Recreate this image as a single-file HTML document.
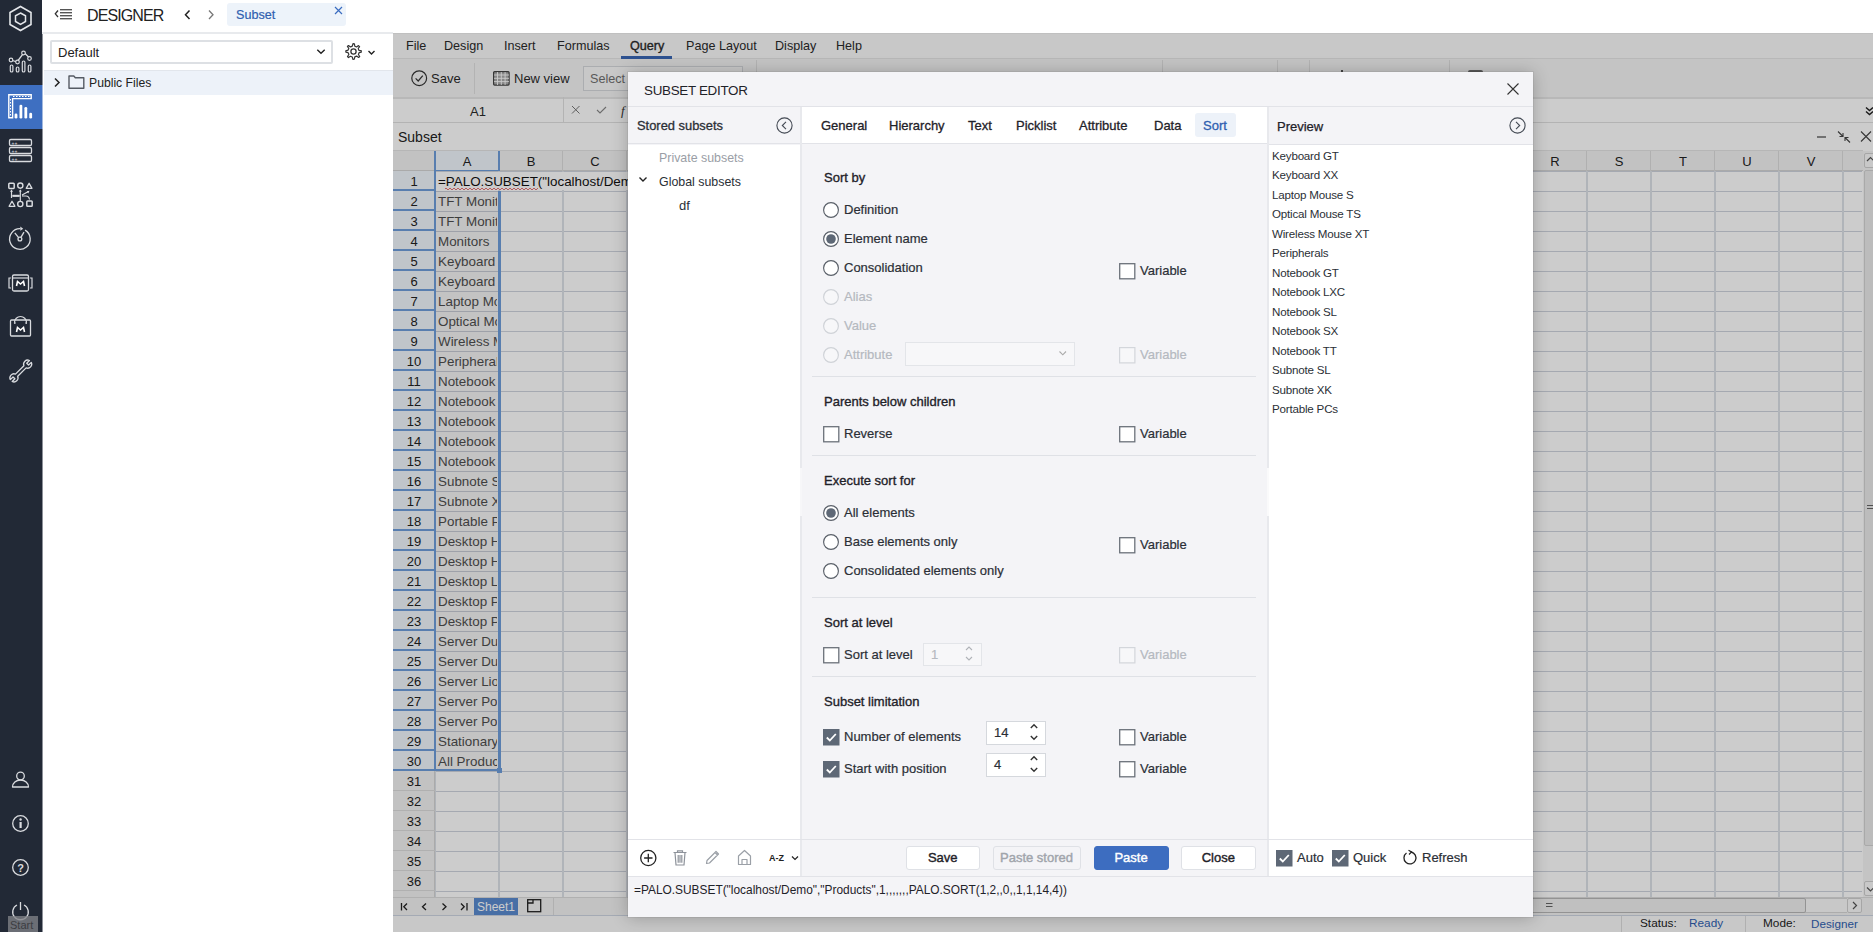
<!DOCTYPE html><html><head><meta charset="utf-8"><style>
*{box-sizing:border-box;margin:0;padding:0}
html,body{width:1873px;height:932px;overflow:hidden}
body{position:relative;font-family:"Liberation Sans",sans-serif;background:#fff;color:#222}
.a{position:absolute}
.t{position:absolute;white-space:nowrap;line-height:1}
svg{position:absolute;overflow:visible}
</style></head><body>
<div class="a" style="left:0;top:0;width:42px;height:932px;background:#222936"></div>
<div class="a" style="left:42px;top:0;width:1px;height:932px;background:#8d9199"></div>
<div class="a" style="left:42px;top:84.5px;width:1px;height:44px;background:#a3b9de"></div>
<div class="a" style="left:0;top:84.5px;width:42px;height:44px;background:#3e6fc1"></div>
<svg style="left:0;top:0" width="42" height="40"><polygon points="20.5,6.5 31,12.5 31,24.5 20.5,30.5 10,24.5 10,12.5" fill="none" stroke="#e4e6ea" stroke-width="1.6"/><polygon points="20.5,13 25.5,15.8 25.5,21.5 20.5,24.3 15.5,21.5 15.5,15.8" fill="none" stroke="#e4e6ea" stroke-width="1.5"/></svg>
<svg style="left:0;top:44px" width="42" height="40"><polyline points="11,16 17,18 24,8.5 30,14.5" fill="none" stroke="#d9dbdf" stroke-width="1.3"/><circle cx="11" cy="16" r="1.8" fill="#222936" stroke="#d9dbdf" stroke-width="1.2"/><circle cx="17.5" cy="18" r="1.8" fill="#222936" stroke="#d9dbdf" stroke-width="1.2"/><circle cx="23.5" cy="9" r="1.8" fill="#222936" stroke="#d9dbdf" stroke-width="1.2"/><circle cx="29.5" cy="14.5" r="1.8" fill="#222936" stroke="#d9dbdf" stroke-width="1.2"/><rect x="10.3" y="21" width="2.6" height="7" rx="1.3" fill="none" stroke="#d9dbdf" stroke-width="1.2"/><rect x="16.3" y="23" width="2.6" height="5" rx="1.3" fill="none" stroke="#d9dbdf" stroke-width="1.2"/><rect x="22.3" y="17" width="2.6" height="11" rx="1.3" fill="none" stroke="#d9dbdf" stroke-width="1.2"/><rect x="28.3" y="21" width="2.6" height="7" rx="1.3" fill="none" stroke="#d9dbdf" stroke-width="1.2"/></svg>
<svg style="left:0;top:84px" width="42" height="44"><path d="M8.8,10.8 H31.2 V14.6 H12.6 V33.8 H8.8 Z" fill="none" stroke="#fff" stroke-width="1.4"/><line x1="13" y1="12.5" x2="30" y2="12.5" stroke="#fff" stroke-width="1" stroke-dasharray="1.5,1.5"/><line x1="10.5" y1="15" x2="10.5" y2="32" stroke="#fff" stroke-width="1" stroke-dasharray="1.5,1.5"/><rect x="14.6" y="29.5" width="2.8" height="5" rx="1.3" fill="#fff"/><rect x="19.5" y="20.8" width="2.8" height="13.7" rx="1.3" fill="#fff"/><rect x="24.4" y="23" width="2.8" height="11.5" rx="1.3" fill="#fff"/><rect x="29.3" y="28.8" width="2.8" height="5.7" rx="1.3" fill="#fff"/></svg>
<svg style="left:0;top:128px" width="42" height="44"><rect x="9.5" y="11.5" width="22" height="6" rx="1.3" fill="none" stroke="#d9dbdf" stroke-width="1.3"/><rect x="9.5" y="19.5" width="22" height="6" rx="1.3" fill="none" stroke="#d9dbdf" stroke-width="1.3"/><rect x="9.5" y="27.5" width="22" height="6" rx="1.3" fill="none" stroke="#d9dbdf" stroke-width="1.3"/><text x="11.5" y="16.5" font-size="5" fill="#d9dbdf" font-family="Liberation Sans">++</text><text x="11.5" y="24.5" font-size="5" fill="#d9dbdf" font-family="Liberation Sans">++</text><text x="11.5" y="32.5" font-size="5" fill="#d9dbdf" font-family="Liberation Sans">++</text></svg>
<svg style="left:0;top:172px" width="42" height="44"><rect x="8.8" y="11.2" width="5.4" height="5.2" rx="0.8" fill="none" stroke="#d9dbdf" stroke-width="1.5"/><circle cx="20.3" cy="13.6" r="2.6" fill="none" stroke="#d9dbdf" stroke-width="1.4"/><polygon points="29.1,11.3 32,16.3 26.2,16.3" fill="none" stroke="#d9dbdf" stroke-width="1.3" stroke-linejoin="round"/><polygon points="12,29.2 14.9,34.3 9.1,34.3" fill="none" stroke="#d9dbdf" stroke-width="1.3" stroke-linejoin="round"/><circle cx="20.3" cy="32" r="2.6" fill="none" stroke="#d9dbdf" stroke-width="1.4"/><rect x="26.8" y="29" width="5.4" height="5.2" rx="0.8" fill="none" stroke="#d9dbdf" stroke-width="1.5"/><path d="M11.5,26 V18.8 M20.3,29 V18.5 M12.5,23.8 H19.5 M22,24 H26 Q29,24 29.5,27.5 M22,23 L28.5,19.5" fill="none" stroke="#d9dbdf" stroke-width="1.2"/><path d="M11.5,17.6 L10,19.8 H13 Z M20.3,17.4 L18.8,19.6 H21.8 Z M29.5,18.8 L26.8,19.3 L28.2,21.5 Z" fill="#d9dbdf"/><rect x="12.5" y="22.8" width="7" height="2" fill="#d9dbdf"/></svg>
<svg style="left:0;top:216px" width="42" height="44"><path d="M25.05,14.08 A10.3,10.3 0 1 1 20.3,12.7" fill="none" stroke="#d9dbdf" stroke-width="1.3"/><path d="M20.3,10.6 L23.2,12.7 L20.3,14.8 Z" fill="#d9dbdf"/><circle cx="19.9" cy="23" r="1.9" fill="none" stroke="#d9dbdf" stroke-width="1.3"/><line x1="20.9" y1="21.3" x2="24" y2="16.2" stroke="#d9dbdf" stroke-width="1.3"/><line x1="18.6" y1="21.6" x2="14.8" y2="16.8" stroke="#d9dbdf" stroke-width="1.3"/></svg>
<svg style="left:0;top:260px" width="42" height="44"><rect x="12.5" y="15" width="16" height="16" rx="1.5" fill="none" stroke="#d9dbdf" stroke-width="1.3"/><line x1="12.5" y1="18" x2="28.5" y2="18" stroke="#d9dbdf" stroke-width="1.2"/><path d="M11,18 H9 V28 H11 M30,18 H32 V28 H30" fill="none" stroke="#d9dbdf" stroke-width="1.2"/><path d="M16.5,26 L17.5,21.5 L20.5,24 L23.5,21.5 L24.5,26" fill="none" stroke="#fff" stroke-width="1.6"/></svg>
<svg style="left:0;top:304px" width="42" height="44"><rect x="10.5" y="16" width="20" height="16" rx="1" fill="none" stroke="#d9dbdf" stroke-width="1.3"/><path d="M14.5,18.5 A6,6 0 0 1 26.5,18.5" fill="none" stroke="#d9dbdf" stroke-width="1.2"/><circle cx="14.8" cy="19" r="0.9" fill="#d9dbdf"/><circle cx="26.2" cy="19" r="0.9" fill="#d9dbdf"/><path d="M16.5,28 L17.5,23.5 L20.5,26 L23.5,23.5 L24.5,28" fill="none" stroke="#fff" stroke-width="1.6"/></svg>
<svg style="left:0;top:348px" width="42" height="44"><g transform="translate(20.8,23) rotate(-45) scale(0.88)"><path d="M-6.77,-1.8 L6.77,-1.8 A4.6,4.6 0 0 1 15.35,-1.5 L11,-1.5 L11,1.5 L15.35,1.5 A4.6,4.6 0 0 1 6.77,1.8 L-6.77,1.8 A4.6,4.6 0 0 1 -15.35,1.5 L-11,1.5 L-11,-1.5 L-15.35,-1.5 A4.6,4.6 0 0 1 -6.77,-1.8 Z" fill="none" stroke="#d9dbdf" stroke-width="1.5" stroke-linejoin="round"/></g></svg>
<svg style="left:0;top:757px" width="42" height="44"><circle cx="20.5" cy="19" r="3.8" fill="none" stroke="#d9dbdf" stroke-width="1.3"/><path d="M12.5,30 A8,7 0 0 1 28.5,30 Z" fill="none" stroke="#d9dbdf" stroke-width="1.3" stroke-linejoin="round"/></svg>
<svg style="left:0;top:801px" width="42" height="44"><circle cx="20.5" cy="22.5" r="7.8" fill="none" stroke="#d9dbdf" stroke-width="1.3"/><rect x="19.5" y="21" width="2.2" height="6" fill="#d9dbdf"/><circle cx="20.6" cy="18.5" r="1.2" fill="#d9dbdf"/></svg>
<svg style="left:0;top:845px" width="42" height="44"><circle cx="20.5" cy="22.5" r="7.8" fill="none" stroke="#d9dbdf" stroke-width="1.3"/><text x="20.6" y="26.5" text-anchor="middle" font-size="11" font-weight="bold" fill="#d9dbdf" font-family="Liberation Sans">?</text></svg>
<svg style="left:0;top:889px" width="42" height="44"><path d="M17,16 A7.8,7.8 0 1 0 24,16" fill="none" stroke="#d9dbdf" stroke-width="1.3"/><line x1="20.5" y1="13" x2="20.5" y2="21" stroke="#d9dbdf" stroke-width="1.3"/></svg>
<div class="a" style="left:8px;top:916px;width:30px;height:16px;background:rgba(128,130,134,0.78)"></div>
<div class="t" style="left:10px;top:920px;font-size:11px;color:#3b3d42">Start</div>
<div class="a" style="left:42px;top:0;width:1831px;height:32px;background:#fff"></div>
<div class="a" style="left:42px;top:32px;width:351px;height:2px;background:#e8eaed"></div>
<svg style="left:54px;top:8px" width="20" height="14"><path d="M4,2.5 L1.3,5.8 L4,9" fill="none" stroke="#333" stroke-width="1.3"/><rect x="6" y="1" width="12" height="1.4" fill="#555"/><rect x="6" y="4" width="12" height="1.4" fill="#555"/><rect x="6" y="7" width="12" height="1.4" fill="#555"/><rect x="6" y="10" width="12" height="1.4" fill="#555"/></svg>
<div class="t" id="designer" style="left:87px;top:8px;font-size:16px;letter-spacing:-0.9px;color:#222">DESIGNER</div>
<svg style="left:183px;top:9px" width="10" height="12"><path d="M6.5,1.5 L2.5,5.8 L6.5,10" fill="none" stroke="#222" stroke-width="1.5"/></svg>
<svg style="left:206px;top:9px" width="10" height="12"><path d="M3,1.5 L7,5.8 L3,10" fill="none" stroke="#777" stroke-width="1.3"/></svg>
<div class="a" style="left:227px;top:3px;width:119px;height:23px;background:#edf3fa;border-radius:3px"></div>
<div class="t" id="subsettab" style="left:236px;top:9px;font-size:12.6px;color:#2f5fb0;-webkit-text-stroke:0.2px #2f5fb0">Subset</div>
<svg style="left:334px;top:6px" width="10" height="10"><path d="M1,1 L8,8 M8,1 L1,8" stroke="#3a6cc0" stroke-width="1.2"/></svg>
<div class="a" style="left:50px;top:39.5px;width:283px;height:24.5px;border:2px solid #dde0e4;border-radius:2px;background:#fff"></div>
<div class="t" id="default" style="left:58px;top:46px;font-size:13px;color:#222">Default</div>
<svg style="left:315px;top:48px" width="12" height="8"><path d="M2.3,1.8 L6,5.3 L9.7,1.8" fill="none" stroke="#222" stroke-width="1.4"/></svg>
<svg style="left:343px;top:42px" width="20" height="20"><path d="M10,1.6 L11.4,1.9 L11.8,4.2 L13.6,5 L15.5,3.6 L16.6,4.6 L15.2,6.5 L15.9,8.3 L18.2,8.7 L18.3,10.1 L16.1,10.7 L15.4,12.5 L16.7,14.5 L15.6,15.5 L13.6,14.1 L11.8,14.9 L11.3,17.2 L9.9,17.3 L9.3,15 L7.5,14.3 L5.5,15.6 L4.5,14.5 L5.9,12.5 L5.1,10.7 L2.9,10.2 L2.8,8.8 L5,8.2 L5.8,6.4 L4.4,4.5 L5.5,3.5 L7.5,4.9 L9.3,4.1 Z" fill="none" stroke="#333" stroke-width="1.2" stroke-linejoin="round"/><circle cx="10.5" cy="9.5" r="2.6" fill="none" stroke="#333" stroke-width="1.3"/></svg>
<svg style="left:366px;top:48.5px" width="12" height="8"><path d="M2.5,2 L5.5,5 L8.5,2" fill="none" stroke="#222" stroke-width="1.4"/></svg>
<div class="a" style="left:44px;top:70px;width:349px;height:24.5px;background:#edf2f9;border-top:1px solid #e2e6ec"></div>
<svg style="left:52px;top:77px" width="10" height="12"><path d="M3,1.5 L7,5.5 L3,9.5" fill="none" stroke="#222" stroke-width="1.5"/></svg>
<svg style="left:67px;top:74px" width="20" height="16"><path d="M2,2 H6.8 L8.3,3.8 H16.8 V14.3 H2 Z" fill="none" stroke="#555b64" stroke-width="1.4" stroke-linejoin="round"/><line x1="1.8" y1="5.6" x2="15.8" y2="5.6" stroke="#555b64" stroke-width="0"/></svg>
<div class="t" id="public" style="left:89px;top:77px;font-size:12.2px;color:#222">Public Files</div>
<div class="a" style="left:393px;top:33px;width:1480px;height:899px;background:#fff;overflow:hidden">
<div class="a" style="left:0;top:0;width:1480px;height:26px;background:#fbfbfb;border-top:1px solid #f0f0f0;border-bottom:1px solid #e6e6e6"></div>
<div class="t" style="left:13px;top:7px;font-size:12.6px;color:#2a2a2a">File</div>
<div class="t" style="left:51px;top:7px;font-size:12.6px;color:#2a2a2a">Design</div>
<div class="t" style="left:111px;top:7px;font-size:12.6px;color:#2a2a2a">Insert</div>
<div class="t" style="left:164px;top:7px;font-size:12.6px;color:#2a2a2a">Formulas</div>
<div class="t" style="left:237px;top:7px;font-size:12.6px;color:#2a2a2a;-webkit-text-stroke:0.35px #2a2a2a">Query</div>
<div class="t" style="left:293px;top:7px;font-size:12.6px;color:#2a2a2a">Page Layout</div>
<div class="t" style="left:382px;top:7px;font-size:12.6px;color:#2a2a2a">Display</div>
<div class="t" style="left:443px;top:7px;font-size:12.6px;color:#2a2a2a">Help</div>
<div class="a" style="left:228px;top:23px;width:51px;height:2.5px;background:#3a67b5"></div>
<div class="a" style="left:0;top:26px;width:1480px;height:40px;background:#f6f6f6;border-bottom:2px solid #e6e6e6"></div>
<svg style="left:18px;top:37px" width="17" height="17"><circle cx="8.2" cy="8.2" r="7.4" fill="none" stroke="#333" stroke-width="1.2"/><path d="M4.6,8.4 L7.2,11 L11.8,5.6" fill="none" stroke="#333" stroke-width="1.2"/></svg>
<div class="t" style="left:38px;top:39px;font-size:13px;color:#2a2a2a">Save</div>
<div class="a" style="left:81px;top:30px;width:1px;height:31px;background:#e0e0e0"></div>
<svg style="left:100px;top:38px" width="17" height="15"><rect x="0.6" y="0.6" width="15.5" height="13.5" rx="1" fill="#aaa" stroke="#444" stroke-width="1.2"/><path d="M4.5,1 V14 M8.3,1 V14 M12.1,1 V14 M1,4 H16 M1,7.3 H16 M1,10.6 H16" stroke="#fff" stroke-width="0.9"/></svg>
<div class="t" style="left:121px;top:39px;font-size:13px;color:#2a2a2a">New view</div>
<div class="a" style="left:190px;top:33px;width:160px;height:25px;background:#fbfbfb;border:1.5px solid #d6d9dd"></div>
<div class="t" style="left:197px;top:40px;font-size:12.6px;color:#707070">Select view</div>
<div class="a" style="left:363px;top:27px;width:1px;height:34px;background:#e0e0e0"></div>
<div class="a" style="left:769px;top:27px;width:1px;height:34px;background:#e0e0e0"></div>
<div class="a" style="left:884px;top:27px;width:1px;height:34px;background:#e0e0e0"></div>
<div class="a" style="left:916px;top:27px;width:1px;height:34px;background:#e0e0e0"></div>
<div class="a" style="left:1056px;top:27px;width:1px;height:34px;background:#e0e0e0"></div>
<div class="a" style="left:1075px;top:37px;width:15px;height:6px;background:#707070;border-radius:2px"></div>
<div class="a" style="left:948px;top:37px;width:2px;height:3px;background:#555"></div>
<div class="a" style="left:0;top:66px;width:1480px;height:24px;background:#fff;border-bottom:1px solid #e0e0e0"></div>
<div class="a" style="left:170px;top:64px;width:1px;height:26px;background:#e0e0e0"></div>
<div class="t" style="left:77px;top:72px;font-size:13px;color:#2a2a2a">A1</div>
<svg style="left:178px;top:72px" width="10" height="10"><path d="M1,1 L8.5,8.5 M8.5,1 L1,8.5" stroke="#777" stroke-width="1"/></svg>
<svg style="left:203px;top:72px" width="11" height="10"><path d="M1,5 L4,8 L10,2" fill="none" stroke="#888" stroke-width="1.1"/></svg>
<div class="t" style="left:228px;top:71px;font-size:13px;font-style:italic;font-family:Liberation Serif;color:#333">f</div>
<svg style="left:1472px;top:73px" width="10" height="12"><path d="M1,1.5 L4.5,4.5 L8,1.5 M1,5.5 L4.5,8.5 L8,5.5" fill="none" stroke="#222" stroke-width="1.4"/></svg>
<div class="t" style="left:5px;top:97px;font-size:14px;color:#222">Subset</div>
<svg style="left:1422px;top:97px" width="58" height="14"><path d="M2,7 H11" stroke="#444" stroke-width="1.2"/><path d="M23,1.5 L28,6.5 M28,3 V6.5 H24.5 M35,12.5 L30,7.5 M30,11 V7.5 H33.5" fill="none" stroke="#444" stroke-width="1.1"/><path d="M46,1.5 L56,11.5 M56,1.5 L46,11.5" stroke="#444" stroke-width="1.1"/></svg>
<div class="a" style="left:0;top:117px;width:1470px;height:21px;background:#f3f3f3;border-top:1px solid #e4e4e4;border-bottom:1px solid #d5d5d5"></div>
<div class="a" style="left:43px;top:118px;width:62px;height:19px;background:#f1f7fd"></div>
<div class="t" style="left:42px;top:122px;width:64px;text-align:center;font-size:13px;color:#222">A</div>
<div class="a" style="left:105px;top:118px;width:1px;height:20px;background:#dcdcdc"></div>
<div class="t" style="left:106px;top:122px;width:64px;text-align:center;font-size:13px;color:#222">B</div>
<div class="a" style="left:169px;top:118px;width:1px;height:20px;background:#dcdcdc"></div>
<div class="t" style="left:170px;top:122px;width:64px;text-align:center;font-size:13px;color:#222">C</div>
<div class="a" style="left:233px;top:118px;width:1px;height:20px;background:#dcdcdc"></div>
<div class="t" style="left:234px;top:122px;width:64px;text-align:center;font-size:13px;color:#222">D</div>
<div class="a" style="left:297px;top:118px;width:1px;height:20px;background:#dcdcdc"></div>
<div class="t" style="left:298px;top:122px;width:64px;text-align:center;font-size:13px;color:#222">E</div>
<div class="a" style="left:361px;top:118px;width:1px;height:20px;background:#dcdcdc"></div>
<div class="t" style="left:362px;top:122px;width:64px;text-align:center;font-size:13px;color:#222">F</div>
<div class="a" style="left:425px;top:118px;width:1px;height:20px;background:#dcdcdc"></div>
<div class="t" style="left:426px;top:122px;width:64px;text-align:center;font-size:13px;color:#222">G</div>
<div class="a" style="left:489px;top:118px;width:1px;height:20px;background:#dcdcdc"></div>
<div class="t" style="left:490px;top:122px;width:64px;text-align:center;font-size:13px;color:#222">H</div>
<div class="a" style="left:553px;top:118px;width:1px;height:20px;background:#dcdcdc"></div>
<div class="t" style="left:554px;top:122px;width:64px;text-align:center;font-size:13px;color:#222">I</div>
<div class="a" style="left:617px;top:118px;width:1px;height:20px;background:#dcdcdc"></div>
<div class="t" style="left:618px;top:122px;width:64px;text-align:center;font-size:13px;color:#222">J</div>
<div class="a" style="left:681px;top:118px;width:1px;height:20px;background:#dcdcdc"></div>
<div class="t" style="left:682px;top:122px;width:64px;text-align:center;font-size:13px;color:#222">K</div>
<div class="a" style="left:745px;top:118px;width:1px;height:20px;background:#dcdcdc"></div>
<div class="t" style="left:746px;top:122px;width:64px;text-align:center;font-size:13px;color:#222">L</div>
<div class="a" style="left:809px;top:118px;width:1px;height:20px;background:#dcdcdc"></div>
<div class="t" style="left:810px;top:122px;width:64px;text-align:center;font-size:13px;color:#222">M</div>
<div class="a" style="left:873px;top:118px;width:1px;height:20px;background:#dcdcdc"></div>
<div class="t" style="left:874px;top:122px;width:64px;text-align:center;font-size:13px;color:#222">N</div>
<div class="a" style="left:937px;top:118px;width:1px;height:20px;background:#dcdcdc"></div>
<div class="t" style="left:938px;top:122px;width:64px;text-align:center;font-size:13px;color:#222">O</div>
<div class="a" style="left:1001px;top:118px;width:1px;height:20px;background:#dcdcdc"></div>
<div class="t" style="left:1002px;top:122px;width:64px;text-align:center;font-size:13px;color:#222">P</div>
<div class="a" style="left:1065px;top:118px;width:1px;height:20px;background:#dcdcdc"></div>
<div class="t" style="left:1066px;top:122px;width:64px;text-align:center;font-size:13px;color:#222">Q</div>
<div class="a" style="left:1129px;top:118px;width:1px;height:20px;background:#dcdcdc"></div>
<div class="t" style="left:1130px;top:122px;width:64px;text-align:center;font-size:13px;color:#222">R</div>
<div class="a" style="left:1193px;top:118px;width:1px;height:20px;background:#dcdcdc"></div>
<div class="t" style="left:1194px;top:122px;width:64px;text-align:center;font-size:13px;color:#222">S</div>
<div class="a" style="left:1257px;top:118px;width:1px;height:20px;background:#dcdcdc"></div>
<div class="t" style="left:1258px;top:122px;width:64px;text-align:center;font-size:13px;color:#222">T</div>
<div class="a" style="left:1321px;top:118px;width:1px;height:20px;background:#dcdcdc"></div>
<div class="t" style="left:1322px;top:122px;width:64px;text-align:center;font-size:13px;color:#222">U</div>
<div class="a" style="left:1385px;top:118px;width:1px;height:20px;background:#dcdcdc"></div>
<div class="t" style="left:1386px;top:122px;width:64px;text-align:center;font-size:13px;color:#222">V</div>
<div class="a" style="left:1449px;top:118px;width:1px;height:20px;background:#dcdcdc"></div>
<div class="t" style="left:1450px;top:122px;width:64px;text-align:center;font-size:13px;color:#222">W</div>
<div class="a" style="left:1513px;top:118px;width:1px;height:20px;background:#dcdcdc"></div>
<div class="a" style="left:105px;top:118px;width:2px;height:20px;background:#6f9edb"></div>
<div class="a" style="left:41px;top:137px;width:66px;height:2px;background:#6f9edb"></div>
<div class="a" style="left:42px;top:138px;width:1427px;height:726px;background-image:linear-gradient(to right,#dde1e8 2px,transparent 2px),linear-gradient(to bottom,#cfd4de 1px,transparent 1px);background-size:64px 20px;background-position:-1px 0,0 0"></div>
<div class="a" style="left:0;top:138px;width:42px;height:726px;background:#f3f3f3;border-right:1px solid #d5d5d5"></div>
<div class="a" style="left:0;top:138px;width:41px;height:20px;background:#f1f7fd;border-bottom:2px solid #6f9edb"></div>
<div class="t" style="left:0;top:142px;width:42px;text-align:center;font-size:13px;color:#222">1</div>
<div class="a" style="left:0;top:158px;width:41px;height:20px;background:#f1f7fd;border-bottom:2px solid #6f9edb"></div>
<div class="t" style="left:0;top:162px;width:42px;text-align:center;font-size:13px;color:#222">2</div>
<div class="a" style="left:0;top:178px;width:41px;height:20px;background:#f1f7fd;border-bottom:2px solid #6f9edb"></div>
<div class="t" style="left:0;top:182px;width:42px;text-align:center;font-size:13px;color:#222">3</div>
<div class="a" style="left:0;top:198px;width:41px;height:20px;background:#f1f7fd;border-bottom:2px solid #6f9edb"></div>
<div class="t" style="left:0;top:202px;width:42px;text-align:center;font-size:13px;color:#222">4</div>
<div class="a" style="left:0;top:218px;width:41px;height:20px;background:#f1f7fd;border-bottom:2px solid #6f9edb"></div>
<div class="t" style="left:0;top:222px;width:42px;text-align:center;font-size:13px;color:#222">5</div>
<div class="a" style="left:0;top:238px;width:41px;height:20px;background:#f1f7fd;border-bottom:2px solid #6f9edb"></div>
<div class="t" style="left:0;top:242px;width:42px;text-align:center;font-size:13px;color:#222">6</div>
<div class="a" style="left:0;top:258px;width:41px;height:20px;background:#f1f7fd;border-bottom:2px solid #6f9edb"></div>
<div class="t" style="left:0;top:262px;width:42px;text-align:center;font-size:13px;color:#222">7</div>
<div class="a" style="left:0;top:278px;width:41px;height:20px;background:#f1f7fd;border-bottom:2px solid #6f9edb"></div>
<div class="t" style="left:0;top:282px;width:42px;text-align:center;font-size:13px;color:#222">8</div>
<div class="a" style="left:0;top:298px;width:41px;height:20px;background:#f1f7fd;border-bottom:2px solid #6f9edb"></div>
<div class="t" style="left:0;top:302px;width:42px;text-align:center;font-size:13px;color:#222">9</div>
<div class="a" style="left:0;top:318px;width:41px;height:20px;background:#f1f7fd;border-bottom:2px solid #6f9edb"></div>
<div class="t" style="left:0;top:322px;width:42px;text-align:center;font-size:13px;color:#222">10</div>
<div class="a" style="left:0;top:338px;width:41px;height:20px;background:#f1f7fd;border-bottom:2px solid #6f9edb"></div>
<div class="t" style="left:0;top:342px;width:42px;text-align:center;font-size:13px;color:#222">11</div>
<div class="a" style="left:0;top:358px;width:41px;height:20px;background:#f1f7fd;border-bottom:2px solid #6f9edb"></div>
<div class="t" style="left:0;top:362px;width:42px;text-align:center;font-size:13px;color:#222">12</div>
<div class="a" style="left:0;top:378px;width:41px;height:20px;background:#f1f7fd;border-bottom:2px solid #6f9edb"></div>
<div class="t" style="left:0;top:382px;width:42px;text-align:center;font-size:13px;color:#222">13</div>
<div class="a" style="left:0;top:398px;width:41px;height:20px;background:#f1f7fd;border-bottom:2px solid #6f9edb"></div>
<div class="t" style="left:0;top:402px;width:42px;text-align:center;font-size:13px;color:#222">14</div>
<div class="a" style="left:0;top:418px;width:41px;height:20px;background:#f1f7fd;border-bottom:2px solid #6f9edb"></div>
<div class="t" style="left:0;top:422px;width:42px;text-align:center;font-size:13px;color:#222">15</div>
<div class="a" style="left:0;top:438px;width:41px;height:20px;background:#f1f7fd;border-bottom:2px solid #6f9edb"></div>
<div class="t" style="left:0;top:442px;width:42px;text-align:center;font-size:13px;color:#222">16</div>
<div class="a" style="left:0;top:458px;width:41px;height:20px;background:#f1f7fd;border-bottom:2px solid #6f9edb"></div>
<div class="t" style="left:0;top:462px;width:42px;text-align:center;font-size:13px;color:#222">17</div>
<div class="a" style="left:0;top:478px;width:41px;height:20px;background:#f1f7fd;border-bottom:2px solid #6f9edb"></div>
<div class="t" style="left:0;top:482px;width:42px;text-align:center;font-size:13px;color:#222">18</div>
<div class="a" style="left:0;top:498px;width:41px;height:20px;background:#f1f7fd;border-bottom:2px solid #6f9edb"></div>
<div class="t" style="left:0;top:502px;width:42px;text-align:center;font-size:13px;color:#222">19</div>
<div class="a" style="left:0;top:518px;width:41px;height:20px;background:#f1f7fd;border-bottom:2px solid #6f9edb"></div>
<div class="t" style="left:0;top:522px;width:42px;text-align:center;font-size:13px;color:#222">20</div>
<div class="a" style="left:0;top:538px;width:41px;height:20px;background:#f1f7fd;border-bottom:2px solid #6f9edb"></div>
<div class="t" style="left:0;top:542px;width:42px;text-align:center;font-size:13px;color:#222">21</div>
<div class="a" style="left:0;top:558px;width:41px;height:20px;background:#f1f7fd;border-bottom:2px solid #6f9edb"></div>
<div class="t" style="left:0;top:562px;width:42px;text-align:center;font-size:13px;color:#222">22</div>
<div class="a" style="left:0;top:578px;width:41px;height:20px;background:#f1f7fd;border-bottom:2px solid #6f9edb"></div>
<div class="t" style="left:0;top:582px;width:42px;text-align:center;font-size:13px;color:#222">23</div>
<div class="a" style="left:0;top:598px;width:41px;height:20px;background:#f1f7fd;border-bottom:2px solid #6f9edb"></div>
<div class="t" style="left:0;top:602px;width:42px;text-align:center;font-size:13px;color:#222">24</div>
<div class="a" style="left:0;top:618px;width:41px;height:20px;background:#f1f7fd;border-bottom:2px solid #6f9edb"></div>
<div class="t" style="left:0;top:622px;width:42px;text-align:center;font-size:13px;color:#222">25</div>
<div class="a" style="left:0;top:638px;width:41px;height:20px;background:#f1f7fd;border-bottom:2px solid #6f9edb"></div>
<div class="t" style="left:0;top:642px;width:42px;text-align:center;font-size:13px;color:#222">26</div>
<div class="a" style="left:0;top:658px;width:41px;height:20px;background:#f1f7fd;border-bottom:2px solid #6f9edb"></div>
<div class="t" style="left:0;top:662px;width:42px;text-align:center;font-size:13px;color:#222">27</div>
<div class="a" style="left:0;top:678px;width:41px;height:20px;background:#f1f7fd;border-bottom:2px solid #6f9edb"></div>
<div class="t" style="left:0;top:682px;width:42px;text-align:center;font-size:13px;color:#222">28</div>
<div class="a" style="left:0;top:698px;width:41px;height:20px;background:#f1f7fd;border-bottom:2px solid #6f9edb"></div>
<div class="t" style="left:0;top:702px;width:42px;text-align:center;font-size:13px;color:#222">29</div>
<div class="a" style="left:0;top:718px;width:41px;height:20px;background:#f1f7fd;border-bottom:2px solid #6f9edb"></div>
<div class="t" style="left:0;top:722px;width:42px;text-align:center;font-size:13px;color:#222">30</div>
<div class="a" style="left:0;top:757px;width:42px;height:1px;background:#dcdcdc"></div>
<div class="t" style="left:0;top:742px;width:42px;text-align:center;font-size:13px;color:#222">31</div>
<div class="a" style="left:0;top:777px;width:42px;height:1px;background:#dcdcdc"></div>
<div class="t" style="left:0;top:762px;width:42px;text-align:center;font-size:13px;color:#222">32</div>
<div class="a" style="left:0;top:797px;width:42px;height:1px;background:#dcdcdc"></div>
<div class="t" style="left:0;top:782px;width:42px;text-align:center;font-size:13px;color:#222">33</div>
<div class="a" style="left:0;top:817px;width:42px;height:1px;background:#dcdcdc"></div>
<div class="t" style="left:0;top:802px;width:42px;text-align:center;font-size:13px;color:#222">34</div>
<div class="a" style="left:0;top:837px;width:42px;height:1px;background:#dcdcdc"></div>
<div class="t" style="left:0;top:822px;width:42px;text-align:center;font-size:13px;color:#222">35</div>
<div class="a" style="left:0;top:857px;width:42px;height:1px;background:#dcdcdc"></div>
<div class="t" style="left:0;top:842px;width:42px;text-align:center;font-size:13px;color:#222">36</div>
<div class="a" style="left:41px;top:118px;width:2px;height:620px;background:#6f9edb"></div>
<div class="a" style="left:43px;top:139px;width:1100px;height:18px;background:#fff"></div>
<div class="a" style="left:43px;top:158px;width:62px;height:578px;background:rgba(0,0,0,0.045)"></div>
<div class="a" style="left:105px;top:158px;width:2.5px;height:580px;background:#6f9edb"></div>
<div class="a" style="left:41px;top:736px;width:66px;height:2px;background:#6f9edb"></div>
<div class="a" style="left:104px;top:735px;width:5px;height:5px;background:#6f9edb"></div>
<div class="a" style="left:44px;top:138px;width:1096px;height:20px;overflow:hidden"><div class="t" style="left:1px;top:4px;font-size:13.4px;color:#111">=PALO.SUBSET("localhost/Demo","Products",1,,,,,,,PALO.SORT(1,2,,0,,1,1,14,4))</div></div>
<div class="a" style="left:44px;top:158px;width:60px;height:20px;overflow:hidden"><div class="t" style="left:1px;top:4px;font-size:13.4px;color:#4e4e4e">TFT Monitors</div></div>
<div class="a" style="left:44px;top:178px;width:60px;height:20px;overflow:hidden"><div class="t" style="left:1px;top:4px;font-size:13.4px;color:#4e4e4e">TFT Monitors</div></div>
<div class="a" style="left:44px;top:198px;width:60px;height:20px;overflow:hidden"><div class="t" style="left:1px;top:4px;font-size:13.4px;color:#4e4e4e">Monitors</div></div>
<div class="a" style="left:44px;top:218px;width:60px;height:20px;overflow:hidden"><div class="t" style="left:1px;top:4px;font-size:13.4px;color:#4e4e4e">Keyboard GT</div></div>
<div class="a" style="left:44px;top:238px;width:60px;height:20px;overflow:hidden"><div class="t" style="left:1px;top:4px;font-size:13.4px;color:#4e4e4e">Keyboard XX</div></div>
<div class="a" style="left:44px;top:258px;width:60px;height:20px;overflow:hidden"><div class="t" style="left:1px;top:4px;font-size:13.4px;color:#4e4e4e">Laptop Mouse S</div></div>
<div class="a" style="left:44px;top:278px;width:60px;height:20px;overflow:hidden"><div class="t" style="left:1px;top:4px;font-size:13.4px;color:#4e4e4e">Optical Mouse TS</div></div>
<div class="a" style="left:44px;top:298px;width:60px;height:20px;overflow:hidden"><div class="t" style="left:1px;top:4px;font-size:13.4px;color:#4e4e4e">Wireless Mouse XT</div></div>
<div class="a" style="left:44px;top:318px;width:60px;height:20px;overflow:hidden"><div class="t" style="left:1px;top:4px;font-size:13.4px;color:#4e4e4e">Peripherals</div></div>
<div class="a" style="left:44px;top:338px;width:60px;height:20px;overflow:hidden"><div class="t" style="left:1px;top:4px;font-size:13.4px;color:#4e4e4e">Notebook GT</div></div>
<div class="a" style="left:44px;top:358px;width:60px;height:20px;overflow:hidden"><div class="t" style="left:1px;top:4px;font-size:13.4px;color:#4e4e4e">Notebook LXC</div></div>
<div class="a" style="left:44px;top:378px;width:60px;height:20px;overflow:hidden"><div class="t" style="left:1px;top:4px;font-size:13.4px;color:#4e4e4e">Notebook SL</div></div>
<div class="a" style="left:44px;top:398px;width:60px;height:20px;overflow:hidden"><div class="t" style="left:1px;top:4px;font-size:13.4px;color:#4e4e4e">Notebook SX</div></div>
<div class="a" style="left:44px;top:418px;width:60px;height:20px;overflow:hidden"><div class="t" style="left:1px;top:4px;font-size:13.4px;color:#4e4e4e">Notebook TT</div></div>
<div class="a" style="left:44px;top:438px;width:60px;height:20px;overflow:hidden"><div class="t" style="left:1px;top:4px;font-size:13.4px;color:#4e4e4e">Subnote SL</div></div>
<div class="a" style="left:44px;top:458px;width:60px;height:20px;overflow:hidden"><div class="t" style="left:1px;top:4px;font-size:13.4px;color:#4e4e4e">Subnote XK</div></div>
<div class="a" style="left:44px;top:478px;width:60px;height:20px;overflow:hidden"><div class="t" style="left:1px;top:4px;font-size:13.4px;color:#4e4e4e">Portable PCs</div></div>
<div class="a" style="left:44px;top:498px;width:60px;height:20px;overflow:hidden"><div class="t" style="left:1px;top:4px;font-size:13.4px;color:#4e4e4e">Desktop H</div></div>
<div class="a" style="left:44px;top:518px;width:60px;height:20px;overflow:hidden"><div class="t" style="left:1px;top:4px;font-size:13.4px;color:#4e4e4e">Desktop H</div></div>
<div class="a" style="left:44px;top:538px;width:60px;height:20px;overflow:hidden"><div class="t" style="left:1px;top:4px;font-size:13.4px;color:#4e4e4e">Desktop L</div></div>
<div class="a" style="left:44px;top:558px;width:60px;height:20px;overflow:hidden"><div class="t" style="left:1px;top:4px;font-size:13.4px;color:#4e4e4e">Desktop P</div></div>
<div class="a" style="left:44px;top:578px;width:60px;height:20px;overflow:hidden"><div class="t" style="left:1px;top:4px;font-size:13.4px;color:#4e4e4e">Desktop P</div></div>
<div class="a" style="left:44px;top:598px;width:60px;height:20px;overflow:hidden"><div class="t" style="left:1px;top:4px;font-size:13.4px;color:#4e4e4e">Server Du</div></div>
<div class="a" style="left:44px;top:618px;width:60px;height:20px;overflow:hidden"><div class="t" style="left:1px;top:4px;font-size:13.4px;color:#4e4e4e">Server Du</div></div>
<div class="a" style="left:44px;top:638px;width:60px;height:20px;overflow:hidden"><div class="t" style="left:1px;top:4px;font-size:13.4px;color:#4e4e4e">Server Lio</div></div>
<div class="a" style="left:44px;top:658px;width:60px;height:20px;overflow:hidden"><div class="t" style="left:1px;top:4px;font-size:13.4px;color:#4e4e4e">Server Po</div></div>
<div class="a" style="left:44px;top:678px;width:60px;height:20px;overflow:hidden"><div class="t" style="left:1px;top:4px;font-size:13.4px;color:#4e4e4e">Server Po</div></div>
<div class="a" style="left:44px;top:698px;width:60px;height:20px;overflow:hidden"><div class="t" style="left:1px;top:4px;font-size:13.4px;color:#4e4e4e">Stationary</div></div>
<div class="a" style="left:44px;top:718px;width:60px;height:20px;overflow:hidden"><div class="t" style="left:1px;top:4px;font-size:13.4px;color:#4e4e4e">All Products</div></div>
<svg style="left:52px;top:154px" width="95" height="4"><path d="M0,2 L1,1 L3,3 L5,1 L7,3 L9,1 L11,3 L13,1 L15,3 L17,1 L19,3 L21,1 L23,3 L25,1 L27,3 L29,1 L31,3 L33,1 L35,3 L37,1 L39,3 L41,1 L43,3 L45,1 L47,3 L49,1 L51,3 L53,1 L55,3 L57,1 L59,3 L61,1 L63,3 L65,1 L67,3 L69,1 L71,3 L73,1 L75,3 L77,1 L79,3 L81,1 L83,3 L85,1 L87,3 L89,1 L91,3 L93,1" fill="none" stroke="#e05050" stroke-width="0.8"/></svg>
<div class="a" style="left:1470px;top:118px;width:10px;height:746px;background:#f6f6f6"></div>
<div class="a" style="left:1471px;top:120px;width:12px;height:15px;background:#fafafa;border:1px solid #d0d0d0;border-radius:2px"></div>
<svg style="left:1473px;top:123px" width="8" height="8"><path d="M1,5 L4.5,1.5 L8,5" fill="none" stroke="#555" stroke-width="1.2"/></svg>
<div class="a" style="left:1471px;top:137px;width:12px;height:676px;background:#ececec;border:1px solid #d4d4d4;border-radius:2px"></div>
<svg style="left:1474px;top:471px" width="7" height="8"><path d="M0,1.5 H7 M0,4.5 H7" stroke="#666" stroke-width="1"/></svg>
<div class="a" style="left:1471px;top:848px;width:12px;height:15px;background:#fafafa;border:1px solid #d0d0d0;border-radius:2px"></div>
<svg style="left:1473px;top:853px" width="8" height="8"><path d="M1,1.5 L4.5,5 L8,1.5" fill="none" stroke="#555" stroke-width="1.2"/></svg>
<div class="a" style="left:0;top:864px;width:1480px;height:20px;background:#f3f3f3;border-top:1px solid #ddd"></div>
<svg style="left:7px;top:869px" width="70" height="10"><path d="M1.5,1 V8.5 M7,1.5 L3.8,4.8 L7,8" fill="none" stroke="#222" stroke-width="1.3"/><path d="M26,1.5 L22.5,4.8 L26,8" fill="none" stroke="#222" stroke-width="1.3"/><path d="M42.5,1.5 L46,4.8 L42.5,8" fill="none" stroke="#222" stroke-width="1.3"/><path d="M61,1.5 L64.2,4.8 L61,8 M67,1 V8.5" fill="none" stroke="#222" stroke-width="1.3"/></svg>
<div class="a" style="left:81px;top:865px;width:44px;height:18px;background:#5b8bd0"></div>
<div class="t" style="left:84px;top:868px;font-size:12px;color:#fff">Sheet1</div>
<svg style="left:134px;top:866px" width="15" height="14"><rect x="0.7" y="0.7" width="13" height="12" fill="none" stroke="#222" stroke-width="1.3"/><path d="M0.7,4 H6 V0.7" fill="none" stroke="#222" stroke-width="1.3"/></svg>
<div class="a" style="left:160px;top:865px;width:1px;height:18px;background:#ddd"></div>
<div class="a" style="left:1140px;top:865px;width:314px;height:15px;background:#fafafa;border-top:1px solid #d8d8d8;border-bottom:1px solid #d8d8d8"></div>
<div class="a" style="left:1127px;top:865px;width:286px;height:15px;background:#f0f0f0;border:1px solid #b8b8b8;border-radius:2px"></div>
<svg style="left:1153px;top:869px" width="8" height="7"><path d="M0,1.5 H6.5 M0,4.5 H6.5" stroke="#666" stroke-width="1"/></svg>
<div class="a" style="left:1454px;top:865px;width:15px;height:15px;background:#fafafa;border:1px solid #d0d0d0;border-radius:2px"></div>
<svg style="left:1458px;top:868px" width="8" height="9"><path d="M2,1 L5.5,4.5 L2,8" fill="none" stroke="#555" stroke-width="1.2"/></svg>
<div class="a" style="left:0;top:882px;width:1480px;height:17px;background:#fbfbfb;border-top:1px solid #cdd5e2"></div>
<div class="a" style="left:1228px;top:883px;width:1px;height:16px;background:#ddd"></div>
<div class="a" style="left:1352px;top:883px;width:1px;height:16px;background:#ddd"></div>
<div class="t" style="left:1247px;top:885px;font-size:11.8px;color:#222">Status:</div>
<div class="t" style="left:1296px;top:885px;font-size:11.8px;color:#2f5fb0">Ready</div>
<div class="t" style="left:1370px;top:885px;font-size:11.8px;color:#222">Mode:</div>
<div class="t" style="left:1418px;top:885px;font-size:11.7px;color:#2f5fb0">Designer</div>
</div>
<div class="a" style="left:393px;top:33px;width:1480px;height:899px;background:rgba(0,0,0,0.2)"></div>
<div class="a" style="left:628px;top:72px;width:905px;height:845px;background:#f4f4f7;box-shadow:0 1px 16px rgba(0,0,0,0.24),0 0 0 1px rgba(0,0,0,0.05)"></div>
<div class="t" id="se" style="left:644px;top:84px;font-size:13.4px;letter-spacing:-0.3px;color:#1f2229">SUBSET EDITOR</div>
<svg style="left:1506px;top:82px" width="14" height="14"><path d="M1.5,1.5 L12.5,12.5 M12.5,1.5 L1.5,12.5" stroke="#333" stroke-width="1.1"/></svg>
<div class="a" style="left:628px;top:106px;width:905px;height:1px;background:#e2e3e8"></div>
<div class="a" style="left:628px;top:107px;width:172px;height:37px;background:#f4f4f7;border-bottom:1px solid #e2e3e8"></div>
<div class="a" style="left:628px;top:145px;width:172px;height:694px;background:#fff"></div>
<div class="a" style="left:800px;top:107px;width:2px;height:769px;background:#e8e9ed"></div>
<div class="t" id="ss" style="left:637px;top:120px;font-size:12.9px;color:#2b2f36;-webkit-text-stroke:0.3px #2b2f36">Stored subsets</div>
<svg style="left:776px;top:117px" width="17" height="17"><circle cx="8.5" cy="8.5" r="7.6" fill="none" stroke="#444a54" stroke-width="1.1"/><path d="M10,4.8 L6.3,8.5 L10,12.2" fill="none" stroke="#444a54" stroke-width="1.1"/></svg>
<div class="t" id="ps" style="left:659px;top:152px;font-size:12.4px;color:#9a9ea6">Private subsets</div>
<svg style="left:638px;top:176px" width="10" height="8"><path d="M1.5,1.5 L5,5 L8.5,1.5" fill="none" stroke="#222" stroke-width="1.4"/></svg>
<div class="t" id="gs" style="left:659px;top:176px;font-size:12.4px;color:#2b2f36">Global subsets</div>
<div class="t" style="left:679px;top:199px;font-size:13px;color:#2b2f36">df</div>
<div class="a" style="left:802px;top:107px;width:466px;height:37px;background:#fff;border-bottom:1.5px solid #e2e3e8"></div>
<div class="t" style="left:821px;top:119px;font-size:13px;color:#1f2229;-webkit-text-stroke:0.3px #1f2229">General</div>
<div class="t" style="left:889px;top:119px;font-size:13px;color:#1f2229;-webkit-text-stroke:0.3px #1f2229">Hierarchy</div>
<div class="t" style="left:968px;top:119px;font-size:13px;color:#1f2229;-webkit-text-stroke:0.3px #1f2229">Text</div>
<div class="t" style="left:1016px;top:119px;font-size:13px;color:#1f2229;-webkit-text-stroke:0.3px #1f2229">Picklist</div>
<div class="t" style="left:1079px;top:119px;font-size:13px;color:#1f2229;-webkit-text-stroke:0.3px #1f2229">Attribute</div>
<div class="t" style="left:1154px;top:119px;font-size:13px;color:#1f2229;-webkit-text-stroke:0.3px #1f2229">Data</div>
<div class="a" style="left:1195px;top:113px;width:41px;height:24px;background:#edf2f9;border-radius:3px"></div>
<div class="t" style="left:1203px;top:119px;font-size:13px;color:#2f5fb0;-webkit-text-stroke:0.3px #2f5fb0">Sort</div>
<div class="a" style="left:800px;top:468px;width:2px;height:48px;background:#f7f7f9"></div>
<div class="a" style="left:1267px;top:107px;width:2px;height:769px;background:#e8e9ed"></div>
<div class="a" style="left:1267px;top:468px;width:2px;height:48px;background:#fafafb"></div>
<div class="a" style="left:1269px;top:144px;width:264px;height:695px;background:#fff;border-top:1px solid #e2e3e8"></div>
<div class="t" style="left:1277px;top:120px;font-size:13px;color:#1f2229;-webkit-text-stroke:0.25px #1f2229">Preview</div>
<svg style="left:1509px;top:117px" width="17" height="17"><circle cx="8.5" cy="8.5" r="7.6" fill="none" stroke="#444a54" stroke-width="1.1"/><path d="M7,4.8 L10.7,8.5 L7,12.2" fill="none" stroke="#444a54" stroke-width="1.1"/></svg>
<div class="t" style="left:1272px;top:149.6px;font-size:11.6px;letter-spacing:-0.2px;color:#2b2f36">Keyboard GT</div>
<div class="t" style="left:1272px;top:169.1px;font-size:11.6px;letter-spacing:-0.2px;color:#2b2f36">Keyboard XX</div>
<div class="t" style="left:1272px;top:188.6px;font-size:11.6px;letter-spacing:-0.2px;color:#2b2f36">Laptop Mouse S</div>
<div class="t" style="left:1272px;top:208.1px;font-size:11.6px;letter-spacing:-0.2px;color:#2b2f36">Optical Mouse TS</div>
<div class="t" style="left:1272px;top:227.6px;font-size:11.6px;letter-spacing:-0.2px;color:#2b2f36">Wireless Mouse XT</div>
<div class="t" style="left:1272px;top:247.1px;font-size:11.6px;letter-spacing:-0.2px;color:#2b2f36">Peripherals</div>
<div class="t" style="left:1272px;top:266.6px;font-size:11.6px;letter-spacing:-0.2px;color:#2b2f36">Notebook GT</div>
<div class="t" style="left:1272px;top:286.1px;font-size:11.6px;letter-spacing:-0.2px;color:#2b2f36">Notebook LXC</div>
<div class="t" style="left:1272px;top:305.6px;font-size:11.6px;letter-spacing:-0.2px;color:#2b2f36">Notebook SL</div>
<div class="t" style="left:1272px;top:325.1px;font-size:11.6px;letter-spacing:-0.2px;color:#2b2f36">Notebook SX</div>
<div class="t" style="left:1272px;top:344.6px;font-size:11.6px;letter-spacing:-0.2px;color:#2b2f36">Notebook TT</div>
<div class="t" style="left:1272px;top:364.1px;font-size:11.6px;letter-spacing:-0.2px;color:#2b2f36">Subnote SL</div>
<div class="t" style="left:1272px;top:383.6px;font-size:11.6px;letter-spacing:-0.2px;color:#2b2f36">Subnote XK</div>
<div class="t" style="left:1272px;top:403.1px;font-size:11.6px;letter-spacing:-0.2px;color:#2b2f36">Portable PCs</div>
<div class="t" style="left:824px;top:171px;font-size:13px;-webkit-text-stroke:0.35px #1f2229;color:#1f2229">Sort by</div>
<svg style="left:822.0px;top:200.5px" width="18" height="18"><circle cx="9" cy="9" r="7.4" fill="#fff" stroke="#5a6069" stroke-width="1.15"/></svg>
<div class="t" style="left:844px;top:202.5px;font-size:13px;-webkit-text-stroke:0.2px #2b2f36;color:#2b2f36">Definition</div>
<svg style="left:822.0px;top:229.5px" width="18" height="18"><circle cx="9" cy="9" r="7.4" fill="#fff" stroke="#5a6069" stroke-width="1.15"/><circle cx="9" cy="9" r="4.8" fill="#5e6876"/></svg>
<div class="t" style="left:844px;top:231.5px;font-size:13px;-webkit-text-stroke:0.2px #2b2f36;color:#2b2f36">Element name</div>
<svg style="left:822.0px;top:258.5px" width="18" height="18"><circle cx="9" cy="9" r="7.4" fill="#fff" stroke="#5a6069" stroke-width="1.15"/></svg>
<div class="t" style="left:844px;top:260.5px;font-size:13px;-webkit-text-stroke:0.2px #2b2f36;color:#2b2f36">Consolidation</div>
<svg style="left:822.0px;top:287.5px" width="18" height="18"><circle cx="9" cy="9" r="7.4" fill="#f7f7f9" stroke="#cfd2d7" stroke-width="1.15"/></svg>
<div class="t" style="left:844px;top:289.5px;font-size:13px;-webkit-text-stroke:0.2px #b5b9c0;color:#b5b9c0">Alias</div>
<svg style="left:822.0px;top:316.5px" width="18" height="18"><circle cx="9" cy="9" r="7.4" fill="#f7f7f9" stroke="#cfd2d7" stroke-width="1.15"/></svg>
<div class="t" style="left:844px;top:318.5px;font-size:13px;-webkit-text-stroke:0.2px #b5b9c0;color:#b5b9c0">Value</div>
<svg style="left:822.0px;top:345.5px" width="18" height="18"><circle cx="9" cy="9" r="7.4" fill="#f7f7f9" stroke="#cfd2d7" stroke-width="1.15"/></svg>
<div class="t" style="left:844px;top:347.5px;font-size:13px;-webkit-text-stroke:0.2px #b5b9c0;color:#b5b9c0">Attribute</div>
<svg style="left:1119px;top:262.7px" width="17" height="17"><rect x="0.7" y="0.7" width="15.1" height="15.1" fill="#fff" stroke="#6b717a" stroke-width="1.3"/></svg>
<div class="t" style="left:1140px;top:264px;font-size:13px;-webkit-text-stroke:0.2px #2b2f36;color:#2b2f36">Variable</div>
<div class="a" style="left:905px;top:342px;width:170px;height:24px;background:#f7f7f9;border:1px solid #e3e5e9"></div>
<svg style="left:1058px;top:350px" width="10" height="7"><path d="M1.5,1.5 L4.8,4.8 L8,1.5" fill="none" stroke="#aaa" stroke-width="1.1"/></svg>
<svg style="left:1119px;top:346.8px" width="17" height="17"><rect x="0.6" y="0.6" width="15.3" height="15.3" fill="#f7f7f9" stroke="#d3d6db" stroke-width="1.2"/></svg>
<div class="t" style="left:1140px;top:348px;font-size:13px;-webkit-text-stroke:0.2px #b5b9c0;color:#b5b9c0">Variable</div>
<div class="a" style="left:812px;top:376px;width:444px;height:1px;background:#dfe1e6"></div>
<div class="t" style="left:824px;top:395px;font-size:13px;-webkit-text-stroke:0.35px #1f2229;color:#1f2229">Parents below children</div>
<svg style="left:823px;top:425.8px" width="17" height="17"><rect x="0.7" y="0.7" width="15.1" height="15.1" fill="#fff" stroke="#6b717a" stroke-width="1.3"/></svg>
<div class="t" style="left:844px;top:427px;font-size:13px;-webkit-text-stroke:0.2px #2b2f36;color:#2b2f36">Reverse</div>
<svg style="left:1119px;top:425.8px" width="17" height="17"><rect x="0.7" y="0.7" width="15.1" height="15.1" fill="#fff" stroke="#6b717a" stroke-width="1.3"/></svg>
<div class="t" style="left:1140px;top:427px;font-size:13px;-webkit-text-stroke:0.2px #2b2f36;color:#2b2f36">Variable</div>
<div class="a" style="left:812px;top:455px;width:444px;height:1px;background:#dfe1e6"></div>
<div class="t" style="left:824px;top:474px;font-size:13px;-webkit-text-stroke:0.35px #1f2229;color:#1f2229">Execute sort for</div>
<svg style="left:822.0px;top:503.5px" width="18" height="18"><circle cx="9" cy="9" r="7.4" fill="#fff" stroke="#5a6069" stroke-width="1.15"/><circle cx="9" cy="9" r="4.8" fill="#5e6876"/></svg>
<div class="t" style="left:844px;top:505.5px;font-size:13px;-webkit-text-stroke:0.2px #2b2f36;color:#2b2f36">All elements</div>
<svg style="left:822.0px;top:532.5px" width="18" height="18"><circle cx="9" cy="9" r="7.4" fill="#fff" stroke="#5a6069" stroke-width="1.15"/></svg>
<div class="t" style="left:844px;top:534.5px;font-size:13px;-webkit-text-stroke:0.2px #2b2f36;color:#2b2f36">Base elements only</div>
<svg style="left:822.0px;top:561.5px" width="18" height="18"><circle cx="9" cy="9" r="7.4" fill="#fff" stroke="#5a6069" stroke-width="1.15"/></svg>
<div class="t" style="left:844px;top:563.5px;font-size:13px;-webkit-text-stroke:0.2px #2b2f36;color:#2b2f36">Consolidated elements only</div>
<svg style="left:1119px;top:536.5px" width="17" height="17"><rect x="0.7" y="0.7" width="15.1" height="15.1" fill="#fff" stroke="#6b717a" stroke-width="1.3"/></svg>
<div class="t" style="left:1140px;top:538px;font-size:13px;-webkit-text-stroke:0.2px #2b2f36;color:#2b2f36">Variable</div>
<div class="a" style="left:812px;top:597px;width:444px;height:1px;background:#dfe1e6"></div>
<div class="t" style="left:824px;top:616px;font-size:13px;-webkit-text-stroke:0.35px #1f2229;color:#1f2229">Sort at level</div>
<svg style="left:823px;top:647px" width="17" height="17"><rect x="0.7" y="0.7" width="15.1" height="15.1" fill="#fff" stroke="#6b717a" stroke-width="1.3"/></svg>
<div class="t" style="left:844px;top:648px;font-size:13px;-webkit-text-stroke:0.2px #2b2f36;color:#2b2f36">Sort at level</div>
<div class="a" style="left:923px;top:643px;width:59px;height:23px;background:#f7f7f9;border:1px solid #e3e5e9"></div>
<div class="t" style="left:931px;top:648px;font-size:13px;-webkit-text-stroke:0.2px #b5b9c0;color:#b5b9c0">1</div>
<svg style="left:964px;top:645px" width="10" height="18"><path d="M2,5 L5,2 L8,5 M2,12 L5,15 L8,12" fill="none" stroke="#b0b3b8" stroke-width="1.1"/></svg>
<svg style="left:1119px;top:647px" width="17" height="17"><rect x="0.6" y="0.6" width="15.3" height="15.3" fill="#f7f7f9" stroke="#d3d6db" stroke-width="1.2"/></svg>
<div class="t" style="left:1140px;top:648px;font-size:13px;-webkit-text-stroke:0.2px #b5b9c0;color:#b5b9c0">Variable</div>
<div class="a" style="left:812px;top:676px;width:444px;height:1px;background:#dfe1e6"></div>
<div class="t" style="left:824px;top:695px;font-size:13px;-webkit-text-stroke:0.35px #1f2229;color:#1f2229">Subset limitation</div>
<svg style="left:823px;top:729px" width="17" height="17"><rect x="0" y="0" width="16.5" height="16.5" fill="#5e6876"/><path d="M3.8,8.5 L6.8,11.5 L12.8,5" fill="none" stroke="#fff" stroke-width="1.8"/></svg>
<div class="t" style="left:844px;top:730px;font-size:13px;-webkit-text-stroke:0.2px #2b2f36;color:#2b2f36">Number of elements</div>
<svg style="left:823px;top:761px" width="17" height="17"><rect x="0" y="0" width="16.5" height="16.5" fill="#5e6876"/><path d="M3.8,8.5 L6.8,11.5 L12.8,5" fill="none" stroke="#fff" stroke-width="1.8"/></svg>
<div class="t" style="left:844px;top:762px;font-size:13px;-webkit-text-stroke:0.2px #2b2f36;color:#2b2f36">Start with position</div>
<div class="a" style="left:986px;top:721px;width:60px;height:24px;background:#fff;border:1px solid #d5d8dd"></div>
<div class="t" style="left:994px;top:726px;font-size:13px;-webkit-text-stroke:0.2px #2b2f36;color:#2b2f36">14</div>
<svg style="left:1029px;top:723px" width="10" height="20"><path d="M1.8,5 L5,1.8 L8.2,5 M1.8,13 L5,16.2 L8.2,13" fill="none" stroke="#333" stroke-width="1.4"/></svg>
<div class="a" style="left:986px;top:753px;width:60px;height:24px;background:#fff;border:1px solid #d5d8dd"></div>
<div class="t" style="left:994px;top:758px;font-size:13px;-webkit-text-stroke:0.2px #2b2f36;color:#2b2f36">4</div>
<svg style="left:1029px;top:755px" width="10" height="20"><path d="M1.8,5 L5,1.8 L8.2,5 M1.8,13 L5,16.2 L8.2,13" fill="none" stroke="#333" stroke-width="1.4"/></svg>
<svg style="left:1119px;top:729px" width="17" height="17"><rect x="0.7" y="0.7" width="15.1" height="15.1" fill="#fff" stroke="#6b717a" stroke-width="1.3"/></svg>
<div class="t" style="left:1140px;top:730px;font-size:13px;-webkit-text-stroke:0.2px #2b2f36;color:#2b2f36">Variable</div>
<svg style="left:1119px;top:761px" width="17" height="17"><rect x="0.7" y="0.7" width="15.1" height="15.1" fill="#fff" stroke="#6b717a" stroke-width="1.3"/></svg>
<div class="t" style="left:1140px;top:762px;font-size:13px;-webkit-text-stroke:0.2px #2b2f36;color:#2b2f36">Variable</div>
<div class="a" style="left:628px;top:839px;width:905px;height:1px;background:#e2e3e8"></div>
<div class="a" style="left:628px;top:840px;width:172px;height:36px;background:#fff"></div>
<div class="a" style="left:1269px;top:840px;width:264px;height:36px;background:#fff"></div>
<div class="a" style="left:628px;top:876px;width:905px;height:1px;background:#e2e3e8"></div>
<svg style="left:639px;top:849px" width="19" height="18"><circle cx="9.3" cy="9" r="7.6" fill="none" stroke="#222" stroke-width="1.3"/><path d="M9.3,4.8 V13.2 M5.1,9 H13.5" stroke="#222" stroke-width="1.3"/></svg>
<svg style="left:672px;top:849px" width="17" height="18"><path d="M1.5,3.5 H14.5 M5.5,3.5 V1.8 H10.5 V3.5 M3,3.5 L4,16 H12 L13,3.5 M6.2,6 V13.8 M8,6 V13.8 M9.8,6 V13.8" fill="none" stroke="#8d929a" stroke-width="1.2"/></svg>
<svg style="left:704px;top:849px" width="17" height="18"><path d="M2.5,14.5 L3,11.5 L12,2.5 L14.5,5 L5.5,14 Z M11,3.5 L13.5,6" fill="none" stroke="#9ba0a7" stroke-width="1.2" stroke-linejoin="round"/></svg>
<svg style="left:737px;top:849px" width="16" height="18"><path d="M1.5,15.5 V7 L7.5,1.5 L13.5,7 V15.5 Z M5,15.5 V10.5 H10 V15.5" fill="none" stroke="#9ba0a7" stroke-width="1.2" stroke-linejoin="round"/></svg>
<div class="t" style="left:769px;top:854px;font-size:9px;font-weight:bold;color:#222">A-Z</div>
<svg style="left:791px;top:855px" width="8" height="7"><path d="M1,1.5 L4,4.5 L7,1.5" fill="none" stroke="#222" stroke-width="1.2"/></svg>
<div class="a" style="left:905.5px;top:846px;width:74.5px;height:24px;border-radius:3px;background:#fff;border:1px solid #dfe1e6;color:#1f2229;font-size:13px;line-height:22px;text-align:center;white-space:nowrap;-webkit-text-stroke:0.4px currentColor">Save</div>
<div class="a" style="left:992.5px;top:846px;width:88.0px;height:24px;border-radius:3px;background:#f4f4f7;border:1px solid #dfe1e6;color:#a0a4ab;font-size:13px;line-height:22px;text-align:center;white-space:nowrap;-webkit-text-stroke:0.4px currentColor">Paste stored</div>
<div class="a" style="left:1093.5px;top:846px;width:75.0px;height:24px;border-radius:3px;background:#3d6dc0;border:1px solid #3d6dc0;color:#fff;font-size:13px;line-height:22px;text-align:center;white-space:nowrap;-webkit-text-stroke:0.4px currentColor">Paste</div>
<div class="a" style="left:1181px;top:846px;width:74.5px;height:24px;border-radius:3px;background:#fff;border:1px solid #dfe1e6;color:#1f2229;font-size:13px;line-height:22px;text-align:center;white-space:nowrap;-webkit-text-stroke:0.4px currentColor">Close</div>
<svg style="left:1276px;top:850px" width="17" height="17"><rect x="0" y="0" width="16.5" height="16.5" fill="#5e6876"/><path d="M3.8,8.5 L6.8,11.5 L12.8,5" fill="none" stroke="#fff" stroke-width="1.8"/></svg>
<div class="t" style="left:1297px;top:851px;font-size:13px;-webkit-text-stroke:0.2px #2b2f36;color:#2b2f36">Auto</div>
<svg style="left:1332px;top:850px" width="17" height="17"><rect x="0" y="0" width="16.5" height="16.5" fill="#5e6876"/><path d="M3.8,8.5 L6.8,11.5 L12.8,5" fill="none" stroke="#fff" stroke-width="1.8"/></svg>
<div class="t" style="left:1353px;top:851px;font-size:13px;-webkit-text-stroke:0.2px #2b2f36;color:#2b2f36">Quick</div>
<svg style="left:1402px;top:849px" width="17" height="17"><path d="M4.5,4 A6,6 0 1 0 9,3" fill="none" stroke="#222" stroke-width="1.3"/><path d="M6.5,1.3 L9.5,3 L7,5.5" fill="none" stroke="#222" stroke-width="1.2"/></svg>
<div class="t" style="left:1422px;top:851px;font-size:13px;-webkit-text-stroke:0.2px #2b2f36;color:#2b2f36">Refresh</div>
<div class="t" id="formula" style="left:634px;top:885px;font-size:11.9px;color:#1f2229">=PALO.SUBSET("localhost/Demo","Products",1,,,,,,,PALO.SORT(1,2,,0,,1,1,14,4))</div>
</body></html>
